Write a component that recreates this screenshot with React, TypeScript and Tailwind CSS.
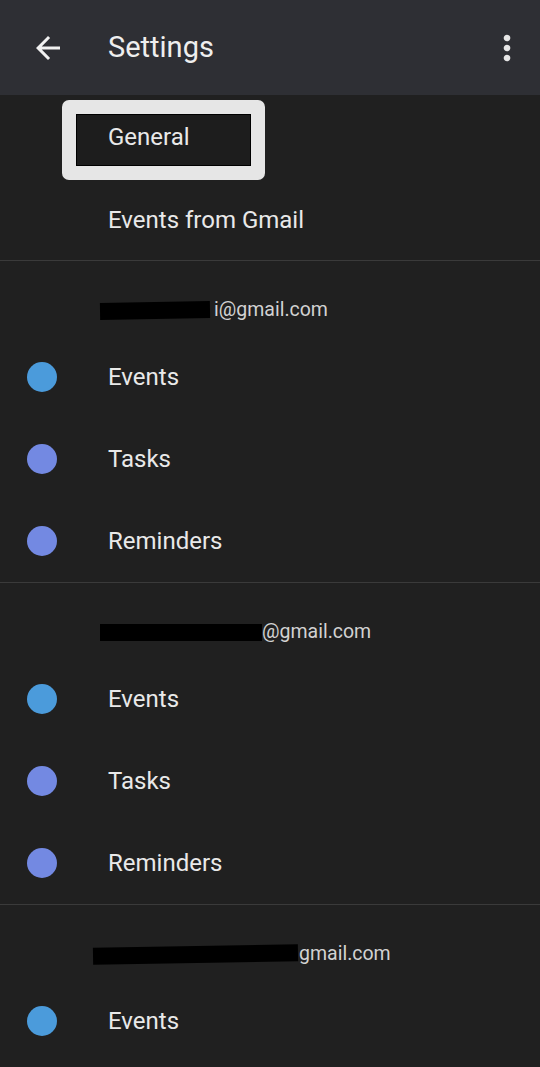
import React from "react";

const font = { fontFamily: "Roboto, 'Noto Sans', Arial, sans-serif" };

function Dot({ color }: { color: string }) {
  return <span className={`block h-[30px] w-[30px] rounded-full ${color}`} />;
}

function Row({ label, dot }: { label: string; dot: "events" | "tasks" }) {
  return (
    <div className="flex h-[82px] items-center">
      <div className="flex w-[108px] items-center pl-[27px]">
        <Dot color={dot === "events" ? "bg-[#4b9bdb]" : "bg-[#7389e2]"} />
      </div>
      <span className="text-[24px] text-[#e9e9e9]">{label}</span>
    </div>
  );
}

function Section({ email, full = true }: { email: React.ReactNode; full?: boolean }) {
  return (
    <div>
      <div className="h-px bg-[#3a3a3a]" />
      <div className="flex h-[75px] items-start pl-[108px] pt-[37px]">
        <div className="flex items-center text-[19.5px] leading-[24px] text-[#d2d2d2]">{email}</div>
      </div>
      <Row label="Events" dot="events" />
      {full && <Row label="Tasks" dot="tasks" />}
      {full && <Row label="Reminders" dot="tasks" />}
    </div>
  );
}

function Bar({ w, ml = 0, rot = "-rotate-1" }: { w: string; ml?: string | number; rot?: string }) {
  return <span className={`relative z-10 inline-block h-[17px] bg-black ${w} ${rot}`} style={{ marginLeft: ml }} />;
}

export default function App() {
  return (
    <div className="h-[1067px] w-[540px] overflow-hidden bg-[#202020]" style={font}>
      <div className="flex h-[95px] items-center bg-[#2e2f34]">
        <div className="flex w-[108px] items-center pl-[30px]">
          <svg width="36" height="36" viewBox="0 0 24 24" fill="#f1f1f1">
            <path d="M20 11H7.83l5.59-5.59L12 4l-8 8 8 8 1.41-1.41L7.83 13H20v-2z" />
          </svg>
        </div>
        <span className="flex-1 text-[29px] text-[#eeeeee]">Settings</span>
        <div className="pr-[13px]">
          <svg width="40" height="40" viewBox="0 0 24 24" fill="#e6e6e6">
            <path d="M12 8c1.1 0 2-.9 2-2s-.9-2-2-2-2 .9-2 2 .9 2 2 2zm0 2c-1.1 0-2 .9-2 2s.9 2 2 2 2-.9 2-2-.9-2-2-2zm0 6c-1.1 0-2 .9-2 2s.9 2 2 2 2-.9 2-2-.9-2-2-2z" />
          </svg>
        </div>
      </div>

      <div className="relative flex h-[83px] items-center pl-[108px] pt-px">
        <div className="absolute left-[62px] top-[5px] h-[80px] w-[203px] rounded-[7px] bg-[#e6e6e6] p-[14px]">
          <div className="h-full w-full border border-black bg-[#1d1d1d]" />
        </div>
        <span className="relative text-[24px] text-[#e9e9e9]">General</span>
      </div>
      <div className="flex h-[82px] items-center pl-[108px] pt-px">
        <span className="text-[24px] text-[#e9e9e9]">Events from Gmail</span>
      </div>

      <Section
        email={
          <>
            <Bar w="w-[110px]" ml={-8} />
            <span className="ml-[4px]">i@gmail.com</span>
          </>
        }
      />
      <Section
        email={
          <>
            <Bar w="w-[162px]" ml={-8} rot="rotate-0" />
            <span>@gmail.com</span>
          </>
        }
      />
      <Section
        full={false}
        email={
          <>
            <Bar w="w-[205px]" ml={-15} />
            <span className="ml-[1px]">gmail.com</span>
          </>
        }
      />
    </div>
  );
}
